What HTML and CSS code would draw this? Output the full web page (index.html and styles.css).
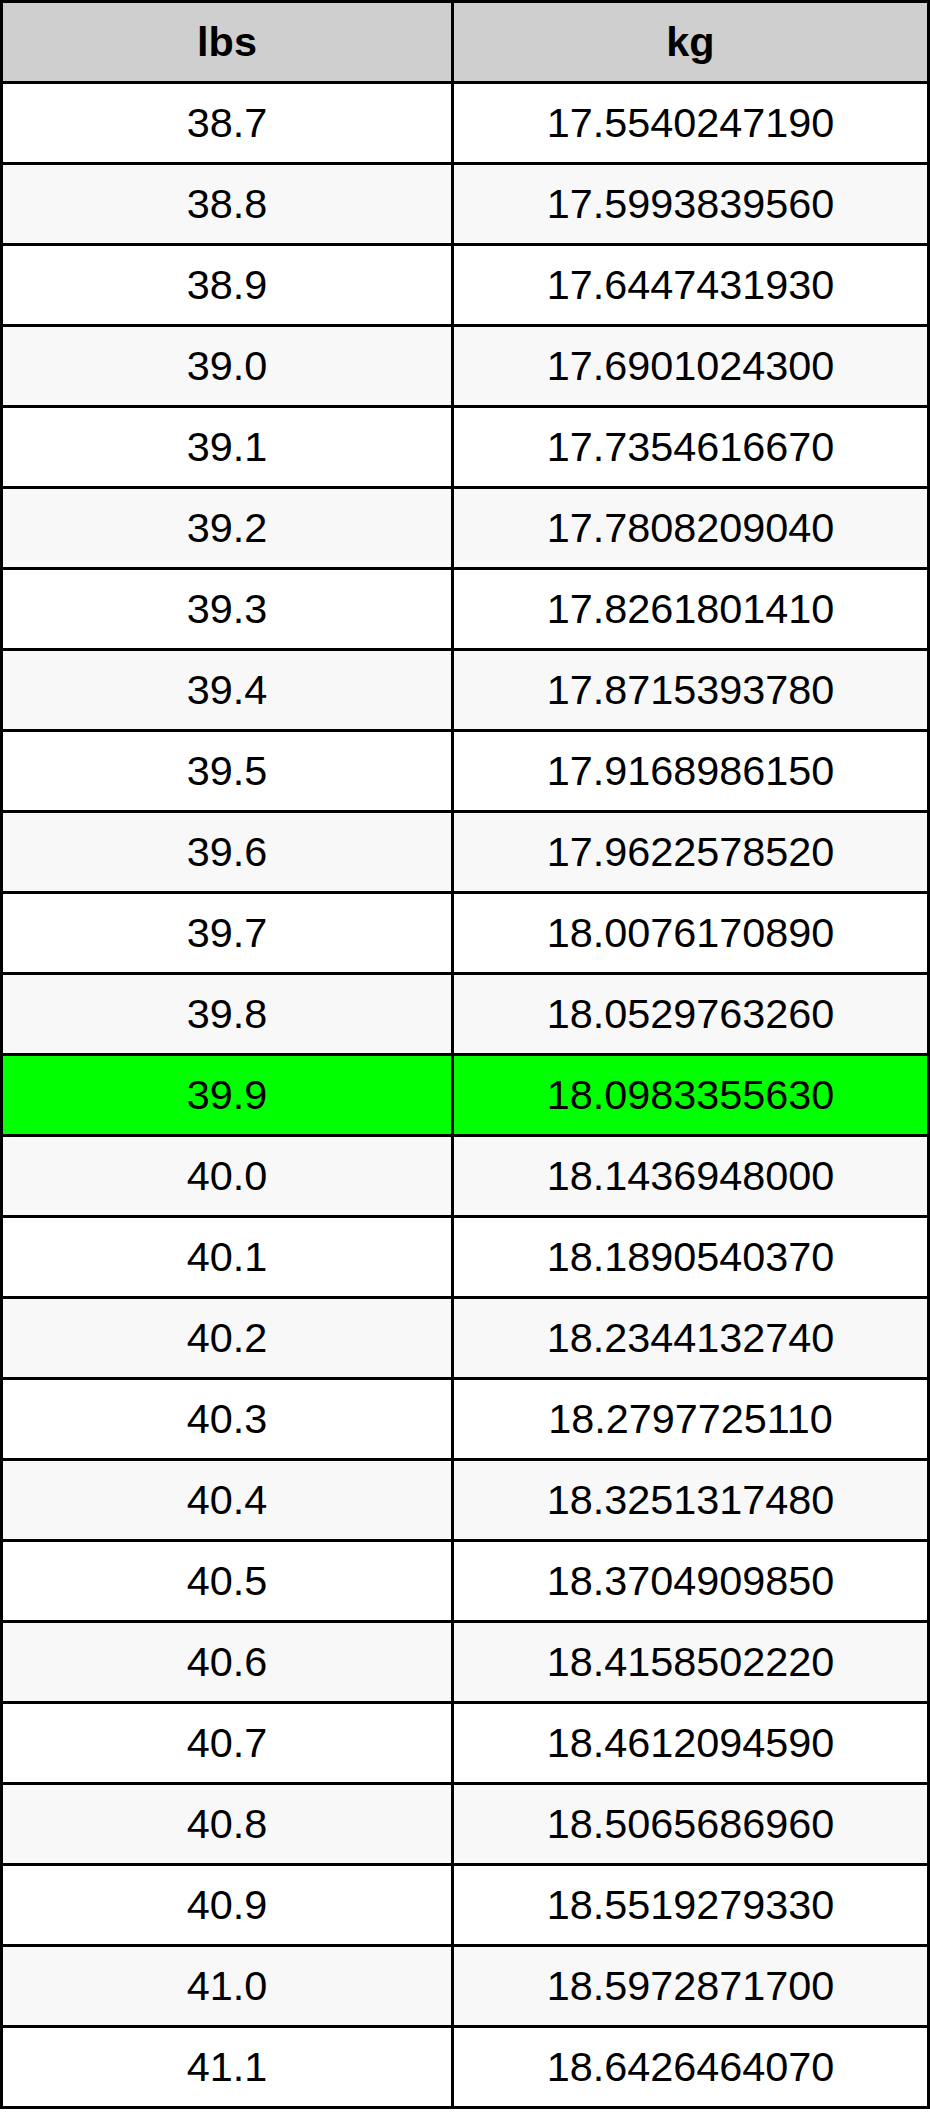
FILE: index.html
```html
<!DOCTYPE html>
<html>
<head>
<meta charset="utf-8">
<link rel="stylesheet" href="styles.css">
</head>
<body>
<table class="conv">
<thead>
<tr><th class="c1">lbs</th><th class="c2">kg</th></tr>
</thead>
<tbody>
<tr class="odd"><td>38.7</td><td>17.5540247190</td></tr>
<tr class="even"><td>38.8</td><td>17.5993839560</td></tr>
<tr class="odd"><td>38.9</td><td>17.6447431930</td></tr>
<tr class="even"><td>39.0</td><td>17.6901024300</td></tr>
<tr class="odd"><td>39.1</td><td>17.7354616670</td></tr>
<tr class="even"><td>39.2</td><td>17.7808209040</td></tr>
<tr class="odd"><td>39.3</td><td>17.8261801410</td></tr>
<tr class="even"><td>39.4</td><td>17.8715393780</td></tr>
<tr class="odd"><td>39.5</td><td>17.9168986150</td></tr>
<tr class="even"><td>39.6</td><td>17.9622578520</td></tr>
<tr class="odd"><td>39.7</td><td>18.0076170890</td></tr>
<tr class="even"><td>39.8</td><td>18.0529763260</td></tr>
<tr class="hl"><td>39.9</td><td>18.0983355630</td></tr>
<tr class="even"><td>40.0</td><td>18.1436948000</td></tr>
<tr class="odd"><td>40.1</td><td>18.1890540370</td></tr>
<tr class="even"><td>40.2</td><td>18.2344132740</td></tr>
<tr class="odd"><td>40.3</td><td>18.2797725110</td></tr>
<tr class="even"><td>40.4</td><td>18.3251317480</td></tr>
<tr class="odd"><td>40.5</td><td>18.3704909850</td></tr>
<tr class="even"><td>40.6</td><td>18.4158502220</td></tr>
<tr class="odd"><td>40.7</td><td>18.4612094590</td></tr>
<tr class="even"><td>40.8</td><td>18.5065686960</td></tr>
<tr class="odd"><td>40.9</td><td>18.5519279330</td></tr>
<tr class="even"><td>41.0</td><td>18.5972871700</td></tr>
<tr class="odd"><td>41.1</td><td>18.6426464070</td></tr>
</tbody>
</table>
</body>
</html>
```
FILE: styles.css
```css
html, body {
  margin: 0;
  padding: 0;
  background: #ffffff;
}

.conv {
  width: 930px;
  table-layout: fixed;
  border-collapse: separate;
  border-spacing: 3px;
  background: #000000;
  font-family: "Liberation Sans", Arial, sans-serif;
  font-size: 41.4px;
  color: #000000;
}

.conv th,
.conv td {
  height: 78px;
  padding: 0;
  text-align: center;
  vertical-align: middle;
  line-height: normal;
}

.conv th {
  background: #cfcfcf;
  font-weight: bold;
}

.conv .c1 {
  width: 448px;
}

.conv .c2 {
  width: 473px;
}

.conv .odd td {
  background: #ffffff;
}

.conv .even td {
  background: #f8f8f8;
}

.conv .hl td {
  background: #00ff00;
}
```
